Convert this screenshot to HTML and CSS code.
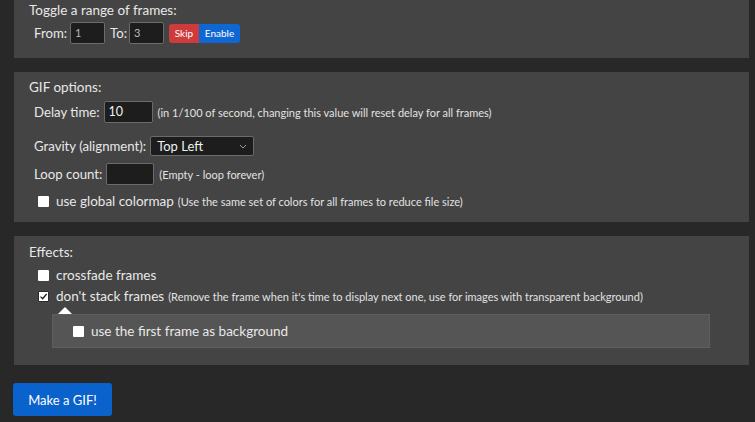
FILE: index.html
```html
<!DOCTYPE html>
<html>
<head>
<meta charset="utf-8">
<link rel="stylesheet" href="styles.css">
</head>
<body>
<div class="page">
  <section class="panel panel-range">
    <div class="heading">Toggle a range of frames:</div>
    <div class="row row-range">
      <span class="label">From:</span>
      <span class="input in-from">1</span>
      <span class="label lbl-to">To:</span>
      <span class="input in-to">3</span>
      <span class="btn-group">
        <span class="btn btn-skip">Skip</span><span class="btn btn-enable">Enable</span>
      </span>
    </div>
  </section>

  <section class="panel panel-gif">
    <div class="heading">GIF options:</div>
    <div class="row row-delay">
      <span class="label">Delay time:</span>
      <span class="input in-delay">10</span>
      <span class="hint">(in 1/100 of second, changing this value will reset delay for all frames)</span>
    </div>
    <div class="row row-gravity">
      <span class="label">Gravity (alignment):</span>
      <span class="select">Top Left
        <svg class="chev" width="8" height="5" viewBox="0 0 8 5"><path d="M1 1l3 3 3-3" fill="none" stroke="#9a9a9a" stroke-width="1"/></svg>
      </span>
    </div>
    <div class="row row-loop">
      <span class="label">Loop count:</span>
      <span class="input in-loop"></span>
      <span class="hint">(Empty - loop forever)</span>
    </div>
    <div class="check-row row-colormap">
      <span class="cb"></span>
      <span class="cb-label">use global colormap</span>
      <span class="hint hint-cb">(Use the same set of colors for all frames to reduce file size)</span>
    </div>
  </section>

  <section class="panel panel-effects">
    <div class="heading">Effects:</div>
    <div class="check-row row-crossfade">
      <span class="cb"></span>
      <span class="cb-label">crossfade frames</span>
    </div>
    <div class="check-row row-stack">
      <span class="cb cb-checked"><svg width="9" height="9" viewBox="0 0 9 9"><path d="M1.5 4.6l2.2 2.1L7.6 2" fill="none" stroke="#1a1a1a" stroke-width="1.3"/></svg></span>
      <span class="cb-label">don't stack frames</span>
      <span class="hint hint-cb">(Remove the frame when it's time to display next one, use for images with transparent background)</span>
    </div>
    <div class="subbox">
      <div class="check-row row-first">
        <span class="cb"></span>
        <span class="cb-label">use the first frame as background</span>
      </div>
    </div>
  </section>

  <div class="actions">
    <span class="btn-make">Make a GIF!</span>
  </div>
</div>
</body>
</html>
```

FILE: styles.css
```css
html, body {
  margin: 0;
  padding: 0;
  background: #282828;
}
body {
  font-family: Lato, "Noto Sans", "Liberation Sans", sans-serif;
  color: #e8e8e8;
  font-size: 13px;
  width: 755px;
  height: 422px;
  overflow: hidden;
}
.page {
  padding-left: 14px;
  width: 735px;
}
.panel {
  background: #444444;
  padding: 0 15px;
  box-sizing: border-box;
  width: 735px;
}
.panel + .panel {
  margin-top: 14px;
}
.heading {
  font-size: 13.5px;
  line-height: 20px;
  height: 20px;
}
.row {
  display: flex;
  align-items: center;
  padding-left: 5px;
  white-space: nowrap;
}
.label {
  font-size: 13.2px;
}
.input {
  display: inline-block;
  box-sizing: border-box;
  height: 22px;
  background: #1d1d1d;
  border: 1px solid #6b6b6b;
  border-radius: 2px;
  font-size: 12.5px;
  line-height: 20px;
  padding-left: 4px;
  color: #f0f0f0;
}

/* panel 1 */
.panel-range {
  padding-top: 0;
  padding-bottom: 14px;
}
.row-range {
  margin-top: 2px;
  height: 22px;
}
.in-from { width: 35px; margin-left: 3px; color: #b9b9b9; font-size: 11px; }
.lbl-to { margin-left: 5px; }
.in-to { width: 35px; margin-left: 2px; color: #b9b9b9; font-size: 11px; }
.btn-group {
  display: inline-flex;
  margin-left: 5px;
}
.btn {
  display: inline-block;
  height: 19px;
  line-height: 19px;
  font-size: 10px;
  color: #fff;
  text-align: center;
}
.btn-skip {
  width: 30px;
  background: #cf3b3b;
  border-radius: 3px 0 0 3px;
}
.btn-enable {
  width: 41px;
  background: #0e67d2;
  border-radius: 0 3px 3px 0;
}

/* panel 2 */
.panel-gif {
  padding-top: 5px;
  padding-bottom: 11px;
}
.row-delay { margin-top: 4px; height: 22px; }
.in-delay { width: 49px; margin-left: 4px; }
.hint {
  font-size: 11px;
  margin-left: 5px;
  color: #e2e2e2;
}
.row-gravity { margin-top: 13px; height: 20px; }
.select {
  display: inline-flex;
  align-items: center;
  justify-content: space-between;
  box-sizing: border-box;
  width: 104px;
  height: 20px;
  margin-left: 4px;
  background: #1d1d1d;
  border: 1px solid #6b6b6b;
  border-radius: 2px;
  font-size: 13px;
  padding: 0 6px 0 6px;
  color: #f0f0f0;
}
.chev { margin-top: 1px; }
.row-loop { margin-top: 7px; height: 22px; }
.in-loop { width: 48px; margin-left: 4px; }

.check-row {
  display: flex;
  align-items: center;
  height: 20px;
  white-space: nowrap;
  padding-left: 9px;
}
.cb {
  display: inline-flex;
  align-items: center;
  justify-content: center;
  box-sizing: border-box;
  width: 11px;
  height: 11px;
  background: #ffffff;
  border-radius: 1px;
  flex: none;
}
.cb-checked {
  border: 1px solid #2a2a2a;
}
.cb-label {
  font-size: 13.5px;
  margin-left: 7px;
}
.hint-cb {
  margin-left: 4px;
}
.row-colormap { margin-top: 6px; }

/* panel 3 */
.panel-effects {
  padding-top: 6px;
  padding-bottom: 17px;
}
.row-crossfade { margin-top: 3px; }
.row-stack { margin-top: 1px; }
.subbox {
  position: relative;
  margin: 8px 24px 0 23px;
  height: 34px;
  box-sizing: border-box;
  background: #555555;
  border: 1px solid #5e5e5e;
  display: flex;
  align-items: center;
}
.subbox::before {
  content: "";
  position: absolute;
  left: 5px;
  top: -8px;
  border-left: 7px solid transparent;
  border-right: 7px solid transparent;
  border-bottom: 7px solid #ffffff;
}
.row-first {
  padding-left: 20px;
}

.actions {
  margin-top: 18px;
  margin-left: -1px;
}
.btn-make {
  display: inline-flex;
  align-items: center;
  justify-content: center;
  width: 99px;
  height: 33px;
  background: #0a62cc;
  border-radius: 3px;
  color: #ffffff;
  font-size: 13px;
}
```
